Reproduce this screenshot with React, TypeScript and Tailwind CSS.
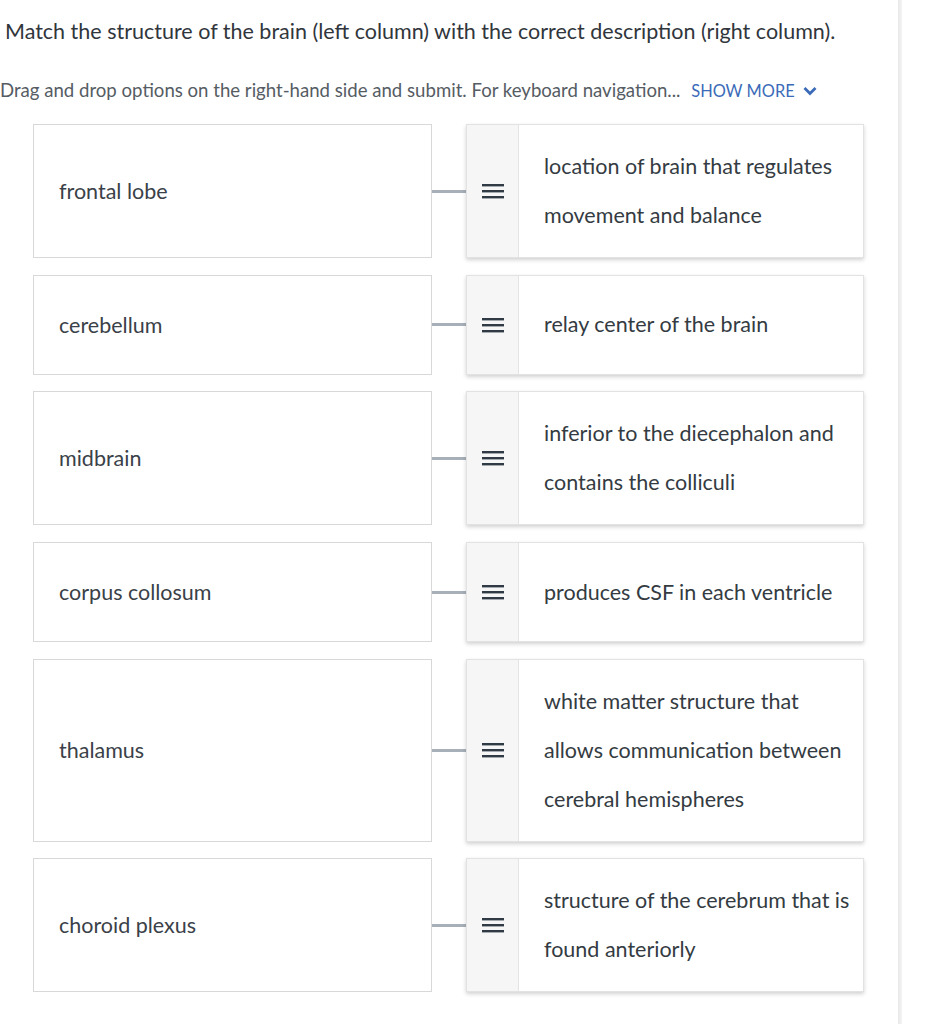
import React from 'react';

type Pair = { term: string; description: string[] };

const PAIRS: Pair[] = [
  { term: 'frontal lobe', description: ['location of brain that regulates', 'movement and balance'] },
  { term: 'cerebellum', description: ['relay center of the brain'] },
  { term: 'midbrain', description: ['inferior to the diecephalon and', 'contains the colliculi'] },
  { term: 'corpus collosum', description: ['produces CSF in each ventricle'] },
  {
    term: 'thalamus',
    description: ['white matter structure that', 'allows communication between', 'cerebral hemispheres'],
  },
  { term: 'choroid plexus', description: ['structure of the cerebrum that is', 'found anteriorly'] },
];

const font = { fontFamily: 'Lato, "Open Sans", sans-serif' };

const DragHandle: React.FC = () => (
  <svg width="22" height="16" viewBox="0 0 22 16" aria-hidden="true">
    <rect x="0" y="1" width="22" height="2.4" fill="#2f3a45" />
    <rect x="0" y="7" width="22" height="2.4" fill="#2f3a45" />
    <rect x="0" y="13" width="22" height="2.4" fill="#2f3a45" />
  </svg>
);

const MatchRow: React.FC<{ pair: Pair }> = ({ pair }) => (
  <div className="flex items-stretch">
    <div className="flex w-[399px] items-center border border-[#d8d8d8] bg-white pl-[25px] text-[21.5px] text-[#3a4148]">
      {pair.term}
    </div>
    <div className="flex w-[34px] items-center">
      <div className="h-[3px] w-full bg-[#a7b0b8]" />
    </div>
    <div className="flex w-[398px] border border-[#e2e2e2] bg-white shadow-[0_2px_4px_rgba(0,0,0,0.18)]">
      <div className="flex w-[52px] shrink-0 items-center justify-center border-r border-[#e4e4e4] bg-[#f6f6f6]">
        <DragHandle />
      </div>
      <div className="flex min-h-[98px] flex-1 flex-col justify-center py-[17px] pl-[25px] pr-3 text-[21.5px] leading-[49px] text-[#343b42]">
        {pair.description.map((line) => (
          <span key={line} className="block whitespace-nowrap">
            {line}
          </span>
        ))}
      </div>
    </div>
  </div>
);

export default function App() {
  return (
    <div className="flex h-[1024px] w-[932px] overflow-hidden bg-white" style={font}>
      <div className="w-[898px] shrink-0">
        <h1 className="pl-[5px] pt-[17px] text-[21.5px] leading-[28px] text-[#30363c]">
          Match the structure of the brain (left column) with the correct description (right column).
        </h1>
        <p className="mt-[33px] whitespace-nowrap text-[18.6px] leading-[24px] text-[#555c63]">
          Drag and drop options on the right-hand side and submit. For keyboard navigation...{' '}
          <button className="ml-[6px] inline-flex items-center gap-[8px] text-[16.4px] text-[#3b6bb8]">
            SHOW MORE
            <svg width="14" height="10" viewBox="0 0 14 10" aria-hidden="true">
              <path d="M1.5 2 L7 7.5 L12.5 2" fill="none" stroke="#3b6bb8" strokeWidth="2.8" />
            </svg>
          </button>
        </p>
        <div className="ml-[33px] mt-[21px] flex flex-col gap-[16.7px]">
          {PAIRS.map((pair) => (
            <MatchRow key={pair.term} pair={pair} />
          ))}
        </div>
      </div>
      <div className="w-[4px] bg-gradient-to-r from-[#e8e8e8] to-[#f4f4f4]" />
      <div className="flex-1 bg-white" />
    </div>
  );
}
